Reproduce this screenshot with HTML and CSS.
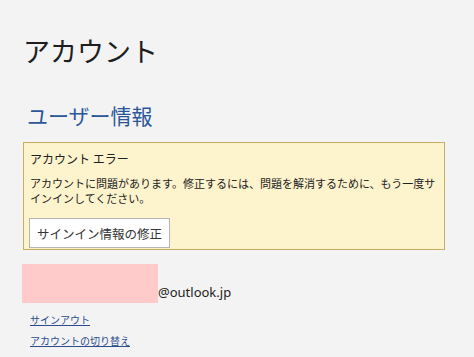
FILE: index.html
```html
<!DOCTYPE html>
<html lang="ja">
<head>
  <meta charset="UTF-8">
  <title>アカウント</title>
  <link rel="stylesheet" href="styles.css">
</head>
<body>
  <div class="page">
    <h1 class="title">アカウント</h1>
    <h2 class="section-title">ユーザー情報</h2>

    <div class="alert">
      <div class="alert-head">アカウント エラー</div>
      <p class="alert-text">アカウントに問題があります。修正するには、問題を解消するために、もう一度サ<br>インインしてください。</p>
      <button class="fix-btn">サインイン情報の修正</button>
    </div>

    <div class="account">
      <div class="masked"></div>
      <span class="mail">@outlook.jp</span>
    </div>

    <div class="links">
      <a href="#">サインアウト</a>
      <a href="#">アカウントの切り替え</a>
    </div>
  </div>
</body>
</html>
```

FILE: styles.css
```css
* {
  margin: 0;
  padding: 0;
  box-sizing: border-box;
}
body {
  background: #f3f3f3;
  color: #222;
  font-family: "Noto Sans CJK JP", "Noto Sans", sans-serif;
}
.page {
  padding: 35px 22px 0 22px;
}
.title {
  font-size: 27px;
  font-weight: 400;
  line-height: 32px;
  color: #1e1e1e;
  margin-left: 1px;
}
.section-title {
  font-size: 21px;
  font-weight: 400;
  line-height: 26px;
  color: #2b579a;
  margin-top: 35px;
  margin-left: 5px;
}
.alert {
  margin-top: 14px;
  margin-left: 1px;
  width: 422px;
  background: #fdf3cd;
  border: 1px solid #c9ad62;
  padding: 8px 0 1px 6px;
}
.alert-head {
  font-size: 12px;
  line-height: 16px;
  color: #222;
}
.alert-text {
  margin-top: 9px;
  font-size: 11px;
  line-height: 15px;
  white-space: nowrap;
  color: #222;
}
.fix-btn {
  display: block;
  margin-top: 12px;
  margin-left: -1px;
  height: 30px;
  padding: 0 7px;
  background: #fff;
  border: 1px solid #b4b4b4;
  font-family: "Noto Sans CJK JP", sans-serif;
  font-size: 12.5px;
  color: #333;
}
.account {
  display: flex;
  align-items: flex-end;
  margin-top: 14px;
}
.masked {
  width: 136px;
  height: 39px;
  background: #ffcaca;
}
.mail {
  font-family: "Noto Sans", sans-serif;
  font-size: 13px;
  line-height: 16px;
  padding-bottom: 3px;
  color: #222;
}
.links {
  display: flex;
  flex-direction: column;
  align-items: flex-start;
  margin-top: 6px;
  margin-left: 8px;
}
.links a {
  font-size: 10px;
  line-height: 21px;
  color: #2b4c8c;
  text-decoration: underline;
}
```
